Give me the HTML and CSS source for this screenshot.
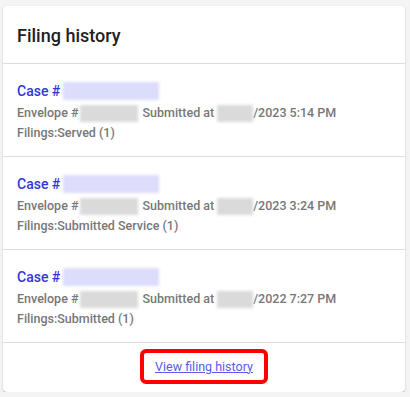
FILE: index.html
```html
<!DOCTYPE html>
<html>
<head>
<meta charset="utf-8">
<link rel="stylesheet" href="styles.css">
</head>
<body>
<div class="card">
  <div class="card-header">Filing history</div>
  <div class="item">
    <div class="case"><span class="case-label">Case #</span><span class="blur blur-case"></span></div>
    <div class="meta">Envelope #<span class="blur blur-env"></span>Submitted at<span class="blur blur-date"></span>/2023 5:14 PM</div>
    <div class="meta filings">Filings:Served (1)</div>
  </div>
  <div class="item">
    <div class="case"><span class="case-label">Case #</span><span class="blur blur-case"></span></div>
    <div class="meta">Envelope #<span class="blur blur-env"></span>Submitted at<span class="blur blur-date"></span>/2023 3:24 PM</div>
    <div class="meta filings">Filings:Submitted Service (1)</div>
  </div>
  <div class="item">
    <div class="case"><span class="case-label">Case #</span><span class="blur blur-case"></span></div>
    <div class="meta">Envelope #<span class="blur blur-env"></span>Submitted at<span class="blur blur-date"></span>/2022 7:27 PM</div>
    <div class="meta filings">Filings:Submitted (1)</div>
  </div>
  <div class="card-footer">
    <span class="highlight"><a class="view-link" href="#">View filing history</a></span>
  </div>
</div>
</body>
</html>
```
FILE: styles.css
```css
html, body {
  margin: 0;
  background: #f4f4f4;
}
body {
  padding: 6px 5px 0 3px;
  font-family: Roboto, "Liberation Sans", sans-serif;
}
.card {
  background: #fff;
  border-radius: 4px;
  box-shadow: 0 2px 1px -1px rgba(0,0,0,0.2), 0 1px 1px 0 rgba(0,0,0,0.14), 0 1px 3px 0 rgba(0,0,0,0.12);
  width: 402px;
  overflow: hidden;
}
.card-header {
  height: 58px;
  box-sizing: border-box;
  padding: 2px 14px 0;
  display: flex;
  align-items: center;
  font-size: 18px;
  font-weight: 500;
  color: #212121;
  border-bottom: 1px solid #dcdcdc;
}
.item {
  padding: 17px 14px 14px;
  border-bottom: 1px solid #dcdcdc;
}
.case {
  height: 20px;
  line-height: 20px;
  margin-bottom: 2px;
  display: flex;
  align-items: center;
}
.case-label {
  font-size: 14px;
  font-weight: 500;
  color: #3535d6;
}
.meta {
  font-size: 12.5px;
  font-weight: 500;
  color: #777;
  line-height: 20px;
  display: flex;
  align-items: center;
  white-space: nowrap;
}
.filings {
  line-height: 19px;
}
.blur {
  display: inline-block;
  filter: blur(1.5px);
}
.blur-case {
  width: 96px;
  height: 18px;
  margin-left: 3px;
  background: #dcdcfb;
}
.blur-env {
  width: 58px;
  height: 17px;
  margin: 0 4px 0 2px;
  background: #dadada;
}
.blur-date {
  width: 36px;
  height: 17px;
  margin-left: 3px;
  background: #dadada;
}
.card-footer {
  height: 49px;
  display: flex;
  justify-content: center;
  align-items: center;
}
.highlight {
  border: 4px solid #f00;
  border-radius: 6px;
  width: 128px;
  height: 35px;
  box-sizing: border-box;
  display: flex;
  align-items: center;
  justify-content: center;
  margin-top: -3px;
}
.view-link {
  font-size: 12.5px;
  color: #5a5af0;
  text-decoration: underline;
}
```
